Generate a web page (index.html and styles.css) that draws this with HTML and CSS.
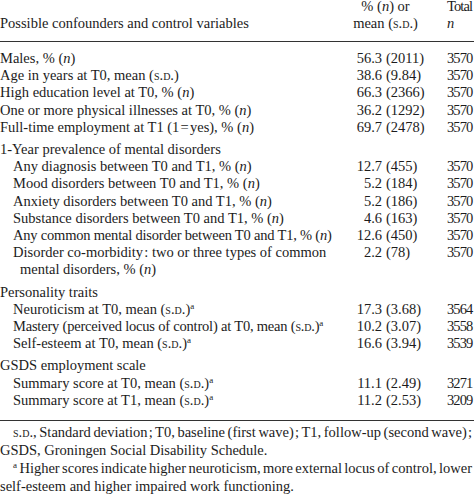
FILE: index.html
```html
<!DOCTYPE html>
<html lang="en">
<head>
    <meta charset="UTF-8">
    <title>Confounders and control variables</title>
    <link rel="stylesheet" href="styles.css">
</head>
<body>
    <table class="stats">
        <colgroup>
            <col class="c-label">
            <col class="c-value">
            <col class="c-total">
        </colgroup>
        <thead>
            <tr>
                <th class="label">Possible confounders and control variables</th>
                <th class="value">% (<i>n</i>) or<br>mean (<span class="sc">s.d.</span>)</th>
                <th class="total">Total<br><i>n</i></th>
            </tr>
        </thead>
        <tbody>
            <tr class="first">
                <td class="label">Males, % (<i>n</i>)</td>
                <td class="value"><span class="num">56.3</span><span class="sd">(2011)</span></td>
                <td class="total">3570</td>
            </tr>
            <tr>
                <td class="label">Age in years at T0, mean (<span class="sc">s.d.</span>)</td>
                <td class="value"><span class="num">38.6</span><span class="sd">(9.84)</span></td>
                <td class="total">3570</td>
            </tr>
            <tr>
                <td class="label">High education level at T0, % (<i>n</i>)</td>
                <td class="value"><span class="num">66.3</span><span class="sd">(2366)</span></td>
                <td class="total">3570</td>
            </tr>
            <tr>
                <td class="label">One or more physical illnesses at T0, % (<i>n</i>)</td>
                <td class="value"><span class="num">36.2</span><span class="sd">(1292)</span></td>
                <td class="total">3570</td>
            </tr>
            <tr>
                <td class="label">Full-time employment at T1 (1&#8202;=&#8202;yes), % (<i>n</i>)</td>
                <td class="value"><span class="num">69.7</span><span class="sd">(2478)</span></td>
                <td class="total">3570</td>
            </tr>

            <!-- mental disorders -->
            <tr class="section">
                <td class="label" colspan="3">1-Year prevalence of mental disorders</td>
            </tr>
            <tr>
                <td class="label sub">Any diagnosis between T0 and T1, % (<i>n</i>)</td>
                <td class="value"><span class="num">12.7</span><span class="sd">(455)</span></td>
                <td class="total">3570</td>
            </tr>
            <tr>
                <td class="label sub">Mood disorders between T0 and T1, % (<i>n</i>)</td>
                <td class="value"><span class="num">5.2</span><span class="sd">(184)</span></td>
                <td class="total">3570</td>
            </tr>
            <tr>
                <td class="label sub">Anxiety disorders between T0 and T1, % (<i>n</i>)</td>
                <td class="value"><span class="num">5.2</span><span class="sd">(186)</span></td>
                <td class="total">3570</td>
            </tr>
            <tr>
                <td class="label sub">Substance disorders between T0 and T1, % (<i>n</i>)</td>
                <td class="value"><span class="num">4.6</span><span class="sd">(163)</span></td>
                <td class="total">3570</td>
            </tr>
            <tr>
                <td class="label sub tight">Any common mental disorder between T0 and T1, % (<i>n</i>)</td>
                <td class="value"><span class="num">12.6</span><span class="sd">(450)</span></td>
                <td class="total">3570</td>
            </tr>
            <tr>
                <td class="label sub wrap">Disorder co-morbidity&#8202;: two or three types of common<br>mental disorders, % (<i>n</i>)</td>
                <td class="value"><span class="num">2.2</span><span class="sd">(78)</span></td>
                <td class="total">3570</td>
            </tr>

            <!-- personality -->
            <tr class="section">
                <td class="label" colspan="3">Personality traits</td>
            </tr>
            <tr>
                <td class="label sub">Neuroticism at T0, mean (<span class="sc">s.d.</span>)<sup>a</sup></td>
                <td class="value"><span class="num">17.3</span><span class="sd">(3.68)</span></td>
                <td class="total">3564</td>
            </tr>
            <tr>
                <td class="label sub tight">Mastery (perceived locus of control) at T0, mean (<span class="sc">s.d.</span>)<sup>a</sup></td>
                <td class="value"><span class="num">10.2</span><span class="sd">(3.07)</span></td>
                <td class="total">3558</td>
            </tr>
            <tr>
                <td class="label sub">Self-esteem at T0, mean (<span class="sc">s.d.</span>)<sup>a</sup></td>
                <td class="value"><span class="num">16.6</span><span class="sd">(3.94)</span></td>
                <td class="total">3539</td>
            </tr>

            <!-- GSDS -->
            <tr class="section">
                <td class="label" colspan="3">GSDS employment scale</td>
            </tr>
            <tr>
                <td class="label sub">Summary score at T0, mean (<span class="sc">s.d.</span>)<sup>a</sup></td>
                <td class="value"><span class="num">11.1</span><span class="sd">(2.49)</span></td>
                <td class="total">3271</td>
            </tr>
            <tr class="last">
                <td class="label sub">Summary score at T1, mean (<span class="sc">s.d.</span>)<sup>a</sup></td>
                <td class="value"><span class="num">11.2</span><span class="sd">(2.53)</span></td>
                <td class="total">3209</td>
            </tr>
        </tbody>
    </table>

    <div class="notes">
        <p class="note">
            <span class="line full"><span class="sc">s.d.</span>, Standard deviation&#8202;; T0, baseline (first wave)&#8202;; T1, follow-up (second wave)&#8202;;</span>
            <span class="line">GSDS, Groningen Social Disability Schedule.</span>
        </p>
        <p class="note">
            <span class="line full"><sup>a</sup> Higher scores indicate higher neuroticism, more external locus of control, lower</span>
            <span class="line">self-esteem and higher impaired work functioning.</span>
        </p>
    </div>
</body>
</html>
```

FILE: styles.css
```css
html, body {
    margin: 0;
    padding: 0;
    background: #fff;
    overflow: hidden;
}
body {
    width: 474px;
    font-family: "Liberation Serif", "Times New Roman", serif;
    font-size: 14.5px;
    color: #1c1c1c;
}
.sc {
    font-variant: small-caps;
}
sup {
    font-size: 9px;
    line-height: 0;
    vertical-align: 5px;
}

/* table */
.stats {
    width: 490px;
    margin-top: -2px;
    border-collapse: collapse;
    table-layout: fixed;
    border-bottom: 1.5px solid #333;
}
.c-label { width: 346px; }
.c-value { width: 101px; }
.c-total { width: 43px; }

th, td {
    padding: 0;
    line-height: 17.2px;
    text-align: left;
    vertical-align: top;
    white-space: nowrap;
}
thead th {
    font-weight: normal;
    line-height: 17px;
    padding-bottom: 9px;
    border-bottom: 1.5px solid #333;
    vertical-align: bottom;
}
thead th.value {
    text-align: center;
    padding-right: 22px;
}
tr.first td { padding-top: 8px; }
tr.section td { padding-top: 5px; }
tr.last td { padding-bottom: 11px; }

td.sub { padding-left: 13px; }
td.tight { letter-spacing: -0.2px; }
td.wrap {
    padding-left: 20px;
    text-indent: -7px;
}
.total {
    letter-spacing: -0.9px;
}
.num {
    display: inline-block;
    width: 36px;
    text-align: right;
}
.sd {
    margin-left: 4px;
}

/* footnotes */
.notes {
    margin-top: 2px;
    width: 472px;
}
.note {
    margin: 0;
    line-height: 18px;
}
.line {
    display: block;
    white-space: nowrap;
}
.line.full {
    padding-left: 13px;
    word-spacing: -2.5px;
    text-align: justify;
    text-align-last: justify;
    white-space: normal;
}
```
